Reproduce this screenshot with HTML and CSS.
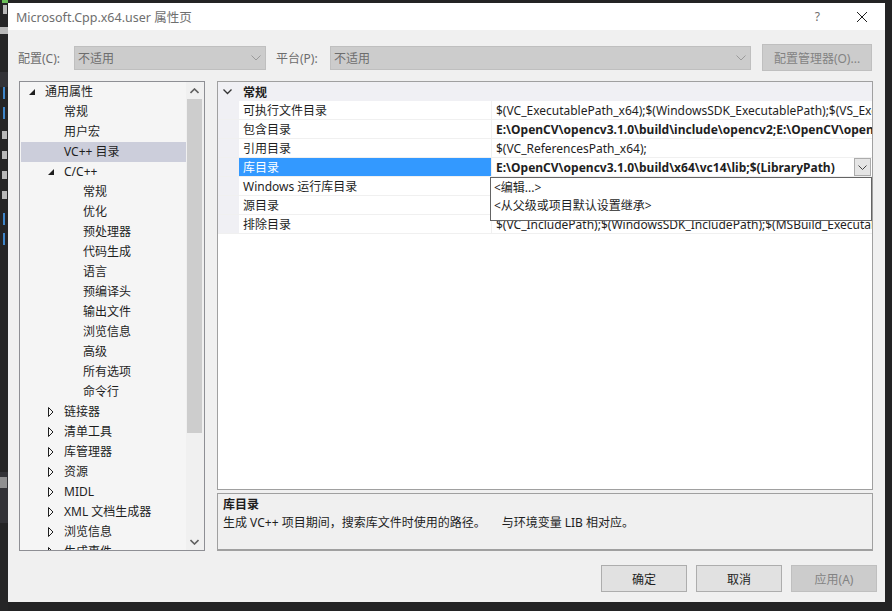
FILE: index.html
```html
<!DOCTYPE html>
<html lang="zh-CN">

<head>
    <meta charset="UTF-8">
    <meta name="viewport" content="width=device-width, initial-scale=1.0">
    <title>Microsoft.Cpp.x64.user 属性页</title>
    <link rel="stylesheet" href="styles.css">
</head>

<body>
    <div class="ide_strip">
        <div class="ide_mark ide_green m_top"></div>
        <div class="ide_mark ide_w m_d"></div>
        <div class="ide_mark ide_w m_on"></div>
        <div class="ide_band_sm"></div>
        <div class="ide_mark ide_b m_br"></div>
        <div class="ide_mark ide_b m_br"></div>
        <div class="ide_mark ide_w m_pen"></div>
        <div class="ide_mark ide_w m_pen"></div>
        <div class="ide_mark ide_w m_pen"></div>
        <div class="ide_mark ide_w m_pen"></div>
        <div class="ide_mark ide_b m_f"></div>
        <div class="ide_mark ide_b m_f"></div>
        <div class="ide_band">
            <div class="ide_mark ide_w m_zi"></div>
        </div>
    </div>

    <div class="dialog">
        <div class="titlebar">
            <span class="title">Microsoft.Cpp.x64.user 属性页</span>
            <span class="tb_help">?</span>
            <span class="tb_close">
                <svg width="12" height="12" viewBox="0 0 12 12">
                    <path d="M1 1 L11 11 M11 1 L1 11" stroke="#1e1e1e" stroke-width="1" fill="none" />
                </svg>
            </span>
        </div>

        <div class="content">
            <div class="config_row">
                <span class="lbl lbl_conf">配置(C):</span>
                <div class="combo combo_conf">
                    <span>不适用</span>
                    <svg width="10" height="6" viewBox="0 0 10 6">
                        <path d="M0.5 0.5 L5 5 L9.5 0.5" stroke="#9a9a9a" fill="none" />
                    </svg>
                </div>
                <span class="lbl lbl_plat">平台(P):</span>
                <div class="combo combo_plat">
                    <span>不适用</span>
                    <svg width="10" height="6" viewBox="0 0 10 6">
                        <path d="M0.5 0.5 L5 5 L9.5 0.5" stroke="#9a9a9a" fill="none" />
                    </svg>
                </div>
                <button class="btn btn_off btn_mgr">配置管理器(O)...</button>
            </div>

            <div class="main">
                <div class="tree">
                    <div class="tree_list">
                        <div class="t_row lv0"><span class="tog"><svg width="7" height="7" viewBox="0 0 7 7"><polygon points="6,0 6,6 0,6" fill="#1e1e1e" /></svg></span>通用属性</div>
                        <div class="t_row lv1"><span class="tog"></span>常规</div>
                        <div class="t_row lv1"><span class="tog"></span>用户宏</div>
                        <div class="t_row lv1 t_sel"><span class="tog"></span>VC++ 目录</div>
                        <div class="t_row lv1"><span class="tog"><svg width="7" height="7" viewBox="0 0 7 7"><polygon points="6,0 6,6 0,6" fill="#1e1e1e" /></svg></span>C/C++</div>
                        <div class="t_row lv2"><span class="tog"></span>常规</div>
                        <div class="t_row lv2"><span class="tog"></span>优化</div>
                        <div class="t_row lv2"><span class="tog"></span>预处理器</div>
                        <div class="t_row lv2"><span class="tog"></span>代码生成</div>
                        <div class="t_row lv2"><span class="tog"></span>语言</div>
                        <div class="t_row lv2"><span class="tog"></span>预编译头</div>
                        <div class="t_row lv2"><span class="tog"></span>输出文件</div>
                        <div class="t_row lv2"><span class="tog"></span>浏览信息</div>
                        <div class="t_row lv2"><span class="tog"></span>高级</div>
                        <div class="t_row lv2"><span class="tog"></span>所有选项</div>
                        <div class="t_row lv2"><span class="tog"></span>命令行</div>
                        <div class="t_row lv1"><span class="tog"><svg width="6" height="10" viewBox="0 0 6 10"><polygon points="0.5,0.5 5,5 0.5,9.5" fill="none" stroke="#1e1e1e" /></svg></span>链接器</div>
                        <div class="t_row lv1"><span class="tog"><svg width="6" height="10" viewBox="0 0 6 10"><polygon points="0.5,0.5 5,5 0.5,9.5" fill="none" stroke="#1e1e1e" /></svg></span>清单工具</div>
                        <div class="t_row lv1"><span class="tog"><svg width="6" height="10" viewBox="0 0 6 10"><polygon points="0.5,0.5 5,5 0.5,9.5" fill="none" stroke="#1e1e1e" /></svg></span>库管理器</div>
                        <div class="t_row lv1"><span class="tog"><svg width="6" height="10" viewBox="0 0 6 10"><polygon points="0.5,0.5 5,5 0.5,9.5" fill="none" stroke="#1e1e1e" /></svg></span>资源</div>
                        <div class="t_row lv1"><span class="tog"><svg width="6" height="10" viewBox="0 0 6 10"><polygon points="0.5,0.5 5,5 0.5,9.5" fill="none" stroke="#1e1e1e" /></svg></span>MIDL</div>
                        <div class="t_row lv1"><span class="tog"><svg width="6" height="10" viewBox="0 0 6 10"><polygon points="0.5,0.5 5,5 0.5,9.5" fill="none" stroke="#1e1e1e" /></svg></span>XML 文档生成器</div>
                        <div class="t_row lv1"><span class="tog"><svg width="6" height="10" viewBox="0 0 6 10"><polygon points="0.5,0.5 5,5 0.5,9.5" fill="none" stroke="#1e1e1e" /></svg></span>浏览信息</div>
                        <div class="t_row lv1"><span class="tog"><svg width="6" height="10" viewBox="0 0 6 10"><polygon points="0.5,0.5 5,5 0.5,9.5" fill="none" stroke="#1e1e1e" /></svg></span>生成事件</div>
                    </div>
                    <div class="scrollbar">
                        <div class="sb_arrow">
                            <svg width="9" height="6" viewBox="0 0 9 6"><path d="M0.5 5 L4.5 1 L8.5 5" stroke="#606060" stroke-width="1.6" fill="none" /></svg>
                        </div>
                        <div class="sb_track">
                            <div class="sb_thumb"></div>
                        </div>
                        <div class="sb_arrow">
                            <svg width="9" height="6" viewBox="0 0 9 6"><path d="M0.5 1 L4.5 5 L8.5 1" stroke="#606060" stroke-width="1.6" fill="none" /></svg>
                        </div>
                    </div>
                </div>

                <div class="right_col">
                    <div class="grid">
                        <div class="g_head">
                            <span class="g_gut">
                                <svg width="9" height="6" viewBox="0 0 9 6"><path d="M0.5 0.5 L4.5 4.5 L8.5 0.5" stroke="#333" stroke-width="1.3" fill="none" /></svg>
                            </span>
                            <span class="g_head_txt">常规</span>
                        </div>
                        <div class="g_row">
                            <span class="g_gut"></span>
                            <span class="g_name">可执行文件目录</span>
                            <span class="g_val">$(VC_ExecutablePath_x64);$(WindowsSDK_ExecutablePath);$(VS_ExecutablePath);$(MSBuild_ExecutablePath);$(FxCopDir);$(PATH);</span>
                        </div>
                        <div class="g_row">
                            <span class="g_gut"></span>
                            <span class="g_name">包含目录</span>
                            <span class="g_val g_bold">E:\OpenCV\opencv3.1.0\build\include\opencv2;E:\OpenCV\opencv3.1.0\build\include;$(IncludePath)</span>
                        </div>
                        <div class="g_row">
                            <span class="g_gut"></span>
                            <span class="g_name">引用目录</span>
                            <span class="g_val">$(VC_ReferencesPath_x64);</span>
                        </div>
                        <div class="g_row g_sel">
                            <span class="g_gut"></span>
                            <span class="g_name">库目录</span>
                            <span class="g_val g_bold">E:\OpenCV\opencv3.1.0\build\x64\vc14\lib;$(LibraryPath)</span>
                            <span class="g_drop">
                                <svg width="9" height="5" viewBox="0 0 9 5"><path d="M0.5 0.5 L4.5 4.5 L8.5 0.5" stroke="#444" fill="none" /></svg>
                            </span>
                        </div>
                        <!-- values of the next two rows are hidden under the open list -->
                        <div class="g_row">
                            <span class="g_gut"></span>
                            <span class="g_name">Windows 运行库目录</span>
                            <span class="g_val"></span>
                        </div>
                        <div class="g_row">
                            <span class="g_gut"></span>
                            <span class="g_name">源目录</span>
                            <span class="g_val"></span>
                        </div>
                        <div class="g_row">
                            <span class="g_gut"></span>
                            <span class="g_name">排除目录</span>
                            <span class="g_val">$(VC_IncludePath);$(WindowsSDK_IncludePath);$(MSBuild_ExecutablePath);$(VC_LibraryPath_x64);</span>
                        </div>

                        <div class="popup">
                            <div class="pop_item">&lt;编辑...&gt;</div>
                            <div class="pop_item">&lt;从父级或项目默认设置继承&gt;</div>
                        </div>
                    </div>

                    <div class="desc">
                        <div class="desc_title">库目录</div>
                        <div class="desc_text">生成 VC++ 项目期间，搜索库文件时使用的路径。<span class="desc_gap">与环境变量 LIB 相对应。</span></div>
                    </div>
                </div>
            </div>

            <div class="buttons">
                <button class="btn">确定</button>
                <button class="btn">取消</button>
                <button class="btn btn_off">应用(A)</button>
            </div>
        </div>
    </div>
</body>

</html>
```

FILE: styles.css
```css
* {
    box-sizing: border-box;
}

body {
    margin: 0;
    width: 892px;
    height: 611px;
    overflow: hidden;
    display: flex;
    background-color: #232324;
    font-family: "Noto Sans", "Noto Sans CJK SC", sans-serif;
    font-size: 12px;
    color: #1e1e1e;
}

/* editor behind the dialog */
.ide_strip {
    width: 8px;
    flex-shrink: 0;
    overflow: hidden;
    background-color: #252526;
    display: flex;
    flex-direction: column;
}

.ide_mark {
    width: 6px;
    flex-shrink: 0;
}

.ide_w {
    background-color: #b8b8b8;
}

.ide_b {
    background-color: #3f86c9;
}

.ide_green {
    background-color: #6bbf59;
}

.m_top {
    height: 3px;
    margin-left: 2px;
}

.m_d {
    height: 9px;
    width: 4px;
    margin: 2px 0 0 3px;
}

.m_on {
    height: 7px;
    width: 8px;
    margin-top: 13px;
}

.ide_band_sm {
    height: 15px;
    margin-top: 38px;
    background-color: #333337;
}

.m_br {
    height: 12px;
    width: 2px;
    margin: 0 0 8px 3px;
}

.m_pen {
    height: 8px;
    width: 5px;
    margin: 4px 0 8px 2px;
}

.m_f {
    height: 12px;
    width: 2px;
    margin: 6px 0 2px 3px;
}

.ide_band {
    margin-top: 225px;
    height: 51px;
    background-color: #333337;
    padding-top: 5px;
}

.m_zi {
    height: 11px;
    width: 7px;
    opacity: 0.7;
}

.dialog {
    width: 877px;
    height: 599px;
    margin-top: 3px;
    background-color: #f0f0f0;
    display: flex;
    flex-direction: column;
}

.titlebar {
    height: 27px;
    background-color: white;
    display: flex;
    align-items: center;
    padding-left: 8px;
}

.title {
    flex: 1;
    color: #6e6e6e;
    font-size: 12.5px;
}

.tb_help {
    color: #6e6e6e;
    font-size: 12px;
    margin-right: 36px;
}

.tb_close {
    display: flex;
    margin-right: 17px;
}

.content {
    flex: 1;
    display: flex;
    flex-direction: column;
}

.config_row {
    display: flex;
    align-items: center;
    height: 27px;
    margin-top: 14px;
    padding-left: 10px;
}

.lbl {
    color: #6d6d6d;
}

.lbl_conf {
    width: 56px;
}

.lbl_plat {
    width: 54px;
    margin-left: 10px;
}

.combo {
    height: 24px;
    background-color: #cccccc;
    border: 1px solid #bfbfbf;
    display: flex;
    align-items: center;
    justify-content: space-between;
    padding: 0 4px 0 3px;
    color: #6d6d6d;
}

.combo_conf {
    width: 192px;
}

.combo_plat {
    width: 421px;
}

.btn {
    font-family: "Noto Sans", "Noto Sans CJK SC", sans-serif;
    font-size: 12px;
    height: 27px;
    width: 86px;
    background-color: #e1e1e1;
    border: 1px solid #adadad;
    color: #1e1e1e;
    padding: 0;
}

.btn_off {
    background-color: #cccccc;
    border-color: #bfbfbf;
    color: #838383;
}

.btn_mgr {
    width: 110px;
    margin-left: 11px;
}

.main {
    display: flex;
    margin-top: 10px;
    padding-left: 11px;
    height: 470px;
}

/* left tree */
.tree {
    width: 186px;
    height: 470px;
    border: 1px solid #8e8f94;
    background-color: #f5f5f5;
    display: flex;
}

.tree_list {
    flex: 1;
    overflow: hidden;
    padding-left: 1px;
}

.t_row {
    height: 20px;
    line-height: 20px;
    display: flex;
    align-items: center;
    white-space: nowrap;
}

.t_sel {
    background-color: #cccedb;
}

.tog {
    width: 17px;
    height: 20px;
    display: flex;
    align-items: center;
    padding-left: 1px;
    flex-shrink: 0;
}

.lv0 {
    padding-left: 7px;
}

.lv1 {
    padding-left: 26px;
}

.lv2 {
    padding-left: 45px;
}

.scrollbar {
    width: 18px;
    background-color: #f0f0f0;
    display: flex;
    flex-direction: column;
    padding: 0 2px 0 1px;
}

.sb_arrow {
    height: 17px;
    display: flex;
    align-items: center;
    justify-content: center;
}

.sb_track {
    flex: 1;
}

.sb_thumb {
    height: 334px;
    background-color: #cdcdcd;
}

/* right side */
.right_col {
    width: 656px;
    margin-left: 12px;
    display: flex;
    flex-direction: column;
}

.grid {
    position: relative;
    height: 409px;
    border: 1px solid #a0a0a0;
    background-color: white;
    overflow: hidden;
}

.g_head {
    height: 19px;
    display: flex;
    align-items: center;
    background-color: #f0f0f4;
}

.g_head_txt {
    font-weight: bold;
    padding-left: 4px;
}

.g_gut {
    width: 21px;
    height: 100%;
    flex-shrink: 0;
    background-color: #f0f0f4;
    display: flex;
    align-items: center;
    padding-left: 5px;
}

.g_row {
    height: 19px;
    display: flex;
    border-bottom: 1px solid #f0f0f0;
    white-space: nowrap;
}

.g_name {
    width: 252px;
    flex-shrink: 0;
    line-height: 18px;
    padding: 1px 0 0 4px;
}

.g_val {
    flex: 1;
    overflow: hidden;
    line-height: 18px;
    padding: 1px 0 0 4px;
    border-left: 1px solid #f0f0f0;
}

.g_bold {
    font-weight: bold;
}

.g_sel .g_name {
    background-color: #3399ff;
    color: white;
}

.g_drop {
    width: 17px;
    height: 18px;
    background-color: #e5e5e5;
    border: 1px solid #acacac;
    display: flex;
    align-items: center;
    justify-content: center;
    margin-right: 1px;
}

.popup {
    position: absolute;
    left: 272px;
    top: 95px;
    width: 382px;
    height: 44px;
    background-color: white;
    border: 1px solid #646464;
    padding-top: 1px;
}

.pop_item {
    height: 18px;
    line-height: 18px;
    padding-left: 3px;
}

.desc {
    height: 58px;
    margin-top: 3px;
    border: 1px solid #a0a0a0;
    border-bottom-width: 2px;
    padding: 2px 5px;
}

.desc_title {
    font-weight: bold;
    line-height: 18px;
}

.desc_text {
    line-height: 18px;
}

.desc_gap {
    padding-left: 16px;
}

.buttons {
    display: flex;
    justify-content: flex-end;
    gap: 9px;
    margin-top: 14px;
    padding-right: 8px;
}
```
